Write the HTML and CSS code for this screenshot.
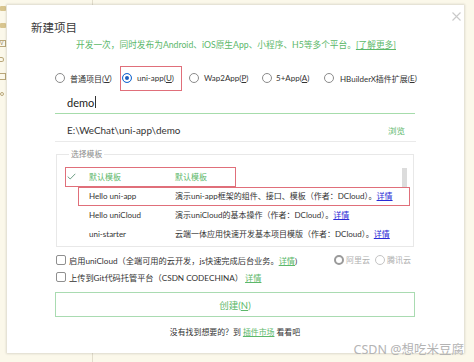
FILE: index.html
```html
<!DOCTYPE html>
<html lang="zh">
<head>
<meta charset="utf-8">
<title>新建项目</title>
<link rel="stylesheet" href="styles.css">
</head>
<body>
<div class="app">
  <aside class="side">
    <div class="strip">
      <span class="ic folder"></span>
      <span class="ic folder f2"></span>
      <span class="ic box">V</span>
      <span class="ic mark"></span>
      <span class="ic box b2"></span>
      <span class="ic dot"></span>
    </div>
  </aside>
  <main class="main"></main>

  <section class="dialog">
    <span class="close"><svg width="9" height="9" viewBox="0 0 9 9"><path d="M0.5 0.5L8.5 8.5M8.5 0.5L0.5 8.5" stroke="#c9c9c9" stroke-width="1.1" fill="none"/></svg></span>
    <h1 class="title">新建项目</h1>
    <div class="content">
      <p class="subtitle">开发一次，同时发布为Android、iOS原生App、小程序、H5等多个平台。<u>[了解更多]</u></p>

      <div class="types">
        <label class="opt o1"><span class="radio"></span>普通项目(<u>V</u>)</label>
        <label class="opt o2"><span class="radio on"></span>uni-app(<u>U</u>)</label>
        <label class="opt o3"><span class="radio"></span>Wap2App(<u>P</u>)</label>
        <label class="opt o4"><span class="radio"></span>5+App(<u>A</u>)</label>
        <label class="opt o5"><span class="radio"></span>HBuilderX插件扩展(<u>E</u>)</label>
      </div>

      <div class="name">demo<span class="caret"></span></div>
      <div class="path"><span>E:\WeChat\uni-app\demo</span><span class="browse">浏览</span></div>

      <fieldset class="tpl">
        <legend>选择模板</legend>
        <div class="tpl-inner">
          <div class="list">
            <div class="row sel">
              <span class="chk"><svg width="9" height="7" viewBox="0 0 9 7"><path d="M0.7 3.6L3.2 6L8.3 0.8" stroke="#6f9f86" stroke-width="1" fill="none"/></svg></span>
              <span class="nm green">默认模板</span>
              <span class="ds green">默认模板</span>
              <i class="anno a1"></i>
            </div>
            <div class="row">
              <span class="chk"></span>
              <span class="nm">Hello uni-app</span>
              <span class="ds">演示uni-app框架的组件、接口、模板（作者：DCloud）。<u class="blue">详情</u></span>
              <i class="anno a2"></i>
            </div>
            <div class="row">
              <span class="chk"></span>
              <span class="nm">Hello uniCloud</span>
              <span class="ds">演示uniCloud的基本操作（作者：DCloud）。<u class="blue">详情</u></span>
            </div>
            <div class="row">
              <span class="chk"></span>
              <span class="nm">uni-starter</span>
              <span class="ds">云端一体应用快速开发基本项目模版（作者：DCloud）。<u class="blue">详情</u></span>
            </div>
          </div>
          <div class="scroll"><span class="thumb"></span></div>
        </div>
      </fieldset>

      <div class="check-row first">
        <span class="cbox"></span>
        <span class="ctext">启用uniCloud（全端可用的云开发，js快速完成后台业务。<u class="green">详情</u>)</span>
        <span class="clouds">
          <span class="radio dis on2"></span><span class="dtext d1">阿里云</span>
          <span class="radio dis"></span><span class="dtext">腾讯云</span>
        </span>
      </div>
      <div class="check-row">
        <span class="cbox"></span>
        <span class="ctext">上传到Git代码托管平台（CSDN CODECHINA） <u class="green">详情</u></span>
      </div>

      <button class="create" type="button">创建(<u>N</u>)</button>

      <p class="footer">没有找到想要的？到 <u class="green">插件市场</u> 看看吧</p>
    </div>
  </section>

  <span class="watermark">CSDN @想吃米豆腐</span>
</div>
</body>
</html>
```

FILE: styles.css
```css
* { box-sizing: border-box; }
html, body { margin: 0; padding: 0; }
body {
  background: #fbf8ea;
  font-family: Lato, "Noto Sans CJK SC", sans-serif;
  color: #333;
  overflow: hidden;
}
u { text-decoration: underline; }

.app {
  position: relative;
  width: 474px;
  height: 362px;
  display: grid;
  grid-template-columns: 93px 1fr;
}
.side { border-right: 1px solid #e2ddcc; }
.strip {
  width: 7px;
  display: flex;
  flex-direction: column;
  align-items: flex-start;
}
.ic { display: block; }
.folder { width: 6px; height: 5px; background: #d8c58f; margin-top: 6px; border-radius: 1px; }
.folder.f2 { margin-top: 12px; }
.box {
  width: 6px; height: 7px; margin-top: 12px;
  border: 1px solid #b9a77a; border-left: none;
  font-size: 5px; line-height: 5px; color: #8c7b55; overflow: hidden;
}
.mark { width: 4px; height: 5px; margin-top: 10px; border: 1px solid #b9a77a; border-left: none; border-radius: 0 3px 3px 0; }
.box.b2 { margin-top: 11px; }
.dot { width: 4px; height: 4px; margin-top: 12px; border: 1px solid #b9a77a; border-radius: 50%; }

.dialog {
  position: absolute;
  left: 7px;
  top: 5px;
  width: 457px;
  height: 348px;
  background: #fff;
  box-shadow: 0 0 2px 1px rgba(0, 0, 0, 0.12);
}
.close { position: absolute; left: 445px; top: 7px; width: 9px; height: 9px; display: block; }
.close svg { display: block; }

.title {
  margin: 13px 0 0 24px;
  height: 20px;
  line-height: 20px;
  font-size: 11.5px;
  font-weight: normal;
  color: #3a3a3a;
}
.content { margin-left: 48px; width: 360px; }

.green { color: #5cb86a; }
.blue { color: #2b2bd6; }

.subtitle {
  margin: 0;
  padding-left: 21px;
  height: 14px;
  line-height: 14px;
  font-size: 8.7px;
  color: #5cb86a;
  white-space: nowrap;
}

.types {
  margin-top: 13px;
  height: 26px;
  display: flex;
  align-items: center;
  font-size: 8px;
  color: #333;
  white-space: nowrap;
}
.opt { display: flex; align-items: center; height: 25px; flex: none; }
.opt .radio { margin-right: 5px; }
.o1 { width: 65px; }
.o2 { width: 62px; padding-left: 1px; border: 1px solid #e06f7a; }
.o3 { width: 73px; margin-left: 7px; }
.o4 { width: 62px; }
.o4 .radio { margin-right: 4px; }
.o5 .radio { margin-right: 6px; }

.radio {
  display: inline-block;
  flex: none;
  width: 10px;
  height: 10px;
  border: 1px solid #8b8b8b;
  border-radius: 50%;
  background: #fff;
}
.radio.on {
  border: 1.5px solid #1f6fd4;
  background: #1c5fbf;
  box-shadow: inset 0 0 0 2px #fff;
}

.name {
  height: 23px;
  border-bottom: 1px solid #a6dcab;
  padding-left: 12px;
  display: flex;
  align-items: center;
  font-size: 11px;
  color: #222;
}
.caret { display: inline-block; width: 1px; height: 12px; background: #333; margin-left: 1px; }

.path {
  height: 28px;
  padding: 5px 11px 0 12px;
  border-bottom: 1px solid #eaeaea;
  display: flex;
  align-items: center;
  justify-content: space-between;
  font-size: 9.9px;
  color: #333;
  margin-right: -1px;
}
.browse { font-size: 8.5px; color: #5cb86a; }

.tpl {
  margin: 6px 1px 0 1px;
  padding: 7px 0 3px 8px;
  border: 1px solid #e8e8e8;
  min-width: 0;
}
.tpl legend {
  margin-left: 4px;
  padding: 0 2px;
  font-size: 7.8px;
  line-height: 12px;
  color: #8d8d8d;
}
.tpl-inner { display: flex; }
.list { flex: 1; min-width: 0; }
.scroll { flex: none; width: 5px; margin: 1px 6px 0 1px; }
.thumb { display: block; width: 5px; height: 19px; background: #dcdcdc; }

.row {
  position: relative;
  height: 19px;
  display: grid;
  grid-template-columns: 13px 86px 1fr;
  align-items: center;
  font-size: 8px;
  color: #333;
  white-space: nowrap;
}
.chk { display: flex; justify-content: center; }
.chk svg { display: block; }
.nm, .ds { padding-left: 11px; }
.anno { position: absolute; border: 1px solid #e06f7a; pointer-events: none; }
.a1 { left: 0; top: 0; width: 171px; height: 20px; }
.a2 { left: 13px; right: -9px; top: 1px; height: 19px; }

.check-row {
  height: 17px;
  display: flex;
  align-items: center;
  font-size: 8.2px;
  color: #333;
  white-space: nowrap;
}
.check-row.first { margin-top: 4px; }
.cbox {
  flex: none;
  width: 10px;
  height: 10px;
  margin: 0 3px 0 1px;
  border: 1px solid #8f8f8f;
  border-radius: 2px;
}
.clouds { margin-left: auto; padding-right: 4px; display: flex; align-items: center; }
.radio.dis { border-color: #c4c4c4; }
.radio.dis.on2 { border: 2px solid #9a9a9a; background: #fff; }
.dtext { color: #b0b0b0; margin-left: 2px; font-size: 8px; }
.dtext.d1 { margin-right: 5px; }

.create {
  display: block;
  width: 360px;
  height: 25px;
  margin-top: 7px;
  border: 1px solid #a9dbb1;
  background: #fff;
  font-family: inherit;
  font-size: 9.5px;
  color: #5cb86a;
  padding: 0;
}

.footer {
  margin: 8px 0 0 0;
  height: 14px;
  line-height: 14px;
  text-align: center;
  font-size: 7.9px;
  color: #333;
}

.watermark {
  position: absolute;
  right: 10px;
  bottom: 4px;
  font-size: 12.5px;
  line-height: 16px;
  color: #b4b4b4;
  font-family: "Noto Sans", "Noto Sans CJK SC", sans-serif;
}
```
